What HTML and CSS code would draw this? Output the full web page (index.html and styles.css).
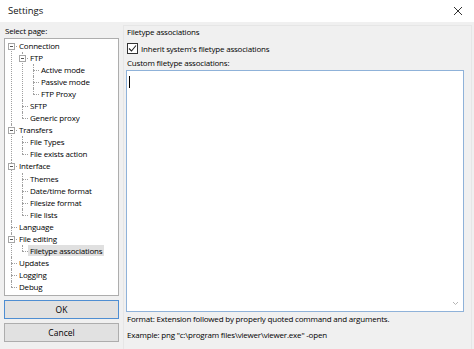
FILE: index.html
```html
<!DOCTYPE html>
<html lang="en">
<head>
    <meta charset="UTF-8">
    <title>Settings</title>
    <link rel="stylesheet" href="styles.css">
</head>
<body>
    <div class="window">
        <div class="titlebar">
            <span class="title">Settings</span>
            <svg class="close" width="10" height="10" viewBox="0 0 10 10">
                <path d="M1 1 L9 9 M9 1 L1 9" stroke="#333" stroke-width="1" fill="none"/>
            </svg>
        </div>
        <div class="main">
            <div class="left">
                <div class="caption">Select page:</div>
                <div class="tree-box">
                    <ul class="tree">
                        <li><span class="exp"></span><span class="label">Connection</span>
                            <ul>
                                <li><span class="exp"></span><span class="label">FTP</span>
                                    <ul>
                                        <li><span class="label">Active mode</span></li>
                                        <li><span class="label">Passive mode</span></li>
                                        <li><span class="label">FTP Proxy</span></li>
                                    </ul>
                                </li>
                                <li><span class="label">SFTP</span></li>
                                <li><span class="label">Generic proxy</span></li>
                            </ul>
                        </li>
                        <li><span class="exp"></span><span class="label">Transfers</span>
                            <ul>
                                <li><span class="label">File Types</span></li>
                                <li><span class="label">File exists action</span></li>
                            </ul>
                        </li>
                        <li><span class="exp"></span><span class="label">Interface</span>
                            <ul>
                                <li><span class="label">Themes</span></li>
                                <li><span class="label">Date/time format</span></li>
                                <li><span class="label">Filesize format</span></li>
                                <li><span class="label">File lists</span></li>
                            </ul>
                        </li>
                        <li><span class="label">Language</span></li>
                        <li><span class="exp"></span><span class="label">File editing</span>
                            <ul>
                                <li><span class="label selected">Filetype associations</span></li>
                            </ul>
                        </li>
                        <li><span class="label">Updates</span></li>
                        <li><span class="label">Logging</span></li>
                        <li><span class="label">Debug</span></li>
                    </ul>
                </div>
                <button class="btn btn-default">OK</button>
                <button class="btn">Cancel</button>
            </div>
            <div class="right">
                <div class="caption">Filetype associations</div>
                <label class="check-row">
                    <span class="checkbox">
                        <svg width="9" height="9" viewBox="0 0 9 9">
                            <path d="M1 4.5 L3.5 7 L8 1.5" stroke="#222" stroke-width="1.1" fill="none"/>
                        </svg>
                    </span>
                    Inherit system's filetype associations
                </label>
                <div class="caption">Custom filetype associations:</div>
                <div class="editor">
                    <span class="caret"></span>
                    <svg class="grip" width="7" height="5" viewBox="0 0 7 5">
                        <path d="M1 1 L3.5 3.5 L6 1" stroke="#b5b5b5" stroke-width="1" fill="none"/>
                    </svg>
                </div>
                <div class="hint">Format: Extension followed by properly quoted command and arguments.</div>
                <div class="hint">Example: png "c:\program files\viewer\viewer.exe" -open</div>
            </div>
        </div>
    </div>
</body>
</html>
```

FILE: styles.css
```css
body {
    margin: 0;
    font-family: "Open Sans", "Noto Sans", sans-serif;
    font-size: 8px;
    font-weight: 500;
    letter-spacing: -0.2px;
    color: #000;
    background: #f0f0f0;
}
.window {
    width: 474px;
    height: 349px;
    overflow: hidden;
}
.titlebar {
    height: 22px;
    background: #fff;
    display: flex;
    align-items: center;
    justify-content: space-between;
    padding: 0 11px 1px 8px;
    box-sizing: border-box;
}
.title {
    font-size: 9.5px;
    font-weight: 400;
    letter-spacing: 0;
    color: #111;
}
.main {
    display: flex;
    padding: 0 0 0 4px;
}
.left {
    width: 115px;
    display: flex;
    flex-direction: column;
}
.caption {
    line-height: 12px;
    margin-top: 3px;
}
.left .caption {
    padding-left: 1px;
}
.tree-box {
    margin-top: 1px;
    height: 258px;
    box-sizing: border-box;
    background: #fff;
    border: 1px solid #adadad;
    padding-top: 1px;
}

/* tree */
.tree, .tree ul {
    list-style: none;
    margin: 0;
    padding: 0;
}
.tree {
    padding-left: 6px;
}
.tree ul {
    padding-left: 4px;
}
.tree li {
    position: relative;
    padding-left: 7px;
    line-height: 12.05px;
}
.tree li::before {
    content: "";
    position: absolute;
    left: 0;
    top: 6px;
    width: 6px;
    border-top: 1px dotted #a0a0a0;
}
.tree li::after {
    content: "";
    position: absolute;
    left: 0;
    top: 0;
    bottom: 0;
    border-left: 1px dotted #a0a0a0;
}
.tree li:last-child::after {
    bottom: auto;
    height: 6px;
}
.tree > li:first-child::after {
    top: 6px;
}
.exp {
    position: absolute;
    left: -3px;
    top: 3px;
    width: 5px;
    height: 5px;
    border: 1px solid #a6a6a6;
    background: #fff;
    z-index: 1;
}
.exp::after {
    content: "";
    position: absolute;
    left: 1px;
    top: 2px;
    width: 3px;
    border-top: 1px solid #555;
}
.label {
    padding: 0 1px;
    white-space: nowrap;
}
.label.selected {
    background: #e0e0e0;
    padding: 0 2px;
    margin-left: -1px;
}

.btn {
    font: inherit;
    font-size: 8.5px;
    height: 19px;
    margin: 0;
    padding: 0;
    background: #e1e1e1;
    border: 1px solid #adadad;
    color: #000;
}
.btn-default {
    margin-top: 4px;
    border-color: #4f8ed2;
}
.btn + .btn {
    margin-top: 4px;
}

.right {
    margin-left: 4px;
    width: 344px;
    border: 1px solid #e6e6e6;
    border-bottom: none;
    margin-top: 3px;
    padding: 0 0 0 3px;
    height: 330px;
}
.right > .caption:first-child {
    margin-top: 0;
}
.check-row {
    display: flex;
    align-items: center;
    gap: 3px;
    height: 12px;
    margin-top: 4px;
}
.checkbox {
    width: 9px;
    height: 9px;
    border: 1px solid #333;
    background: #fff;
    display: flex;
    align-items: center;
    justify-content: center;
}
.right .caption {
    margin-top: 3px;
}
.editor {
    position: relative;
    margin: 1px 0 0 -1px;
    width: 338px;
    height: 242px;
    box-sizing: border-box;
    border: 1px solid #8fb2d9;
    background: #fff;
}
.caret {
    position: absolute;
    left: 2px;
    top: 5px;
    height: 12px;
    border-left: 1px solid #000;
}
.grip {
    position: absolute;
    right: 4px;
    bottom: 5px;
}
.hint {
    line-height: 12px;
    margin-top: 1px;
}
.hint + .hint {
    margin-top: 4px;
}
```
